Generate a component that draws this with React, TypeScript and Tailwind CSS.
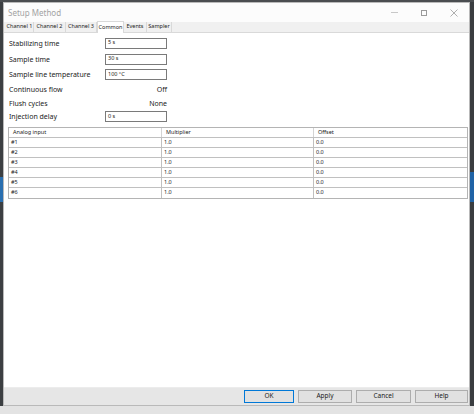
import React from "react";

const font = { fontFamily: '"Noto Sans", "Open Sans", "Liberation Sans", sans-serif' };

function Input({ value }: { value: string }) {
  return (
    <div className="w-[62px] h-[11px] border border-[#7a7a7a] bg-white flex items-center pl-[2px] text-[5.5px] leading-none text-[#222]">
      {value}
    </div>
  );
}

function Row({ label, h, children }: { label: string; h: string; children: React.ReactNode }) {
  return (
    <div className={`flex items-center ${h}`}>
      <div className="w-[96px] text-[7px] leading-none text-[#222]">{label}</div>
      {children}
    </div>
  );
}

const tabs = ["Channel 1", "Channel 2", "Channel 3", "Common", "Events", "Sampler"];
const tabW = ["w-[28px]", "w-[32px]", "w-[31px]", "w-[27px]", "w-[23px]", "w-[25px]"];

export default function App() {
  const rows = ["#1", "#2", "#3", "#4", "#5", "#6"];
  return (
    <div className="w-[474px] h-[414px] bg-[#2f3337] flex flex-col overflow-hidden" style={font}>
      <div className="h-[2px] bg-[#4a4d50]" />
      <div className="flex h-[404px]">
        <div className="w-[3px] flex flex-col">
          <div className="h-[175px] bg-[#3c3f42]" />
          <div className="h-[25px] bg-[#2a6fb0]" />
          <div className="flex-1 bg-[#3c3f42]" />
        </div>
        <div className="w-[467px] h-[404px] bg-white border border-[#b9b9b9] flex flex-col">
          {/* title bar */}
          <div className="h-[19px] flex items-center bg-[#fcfcfc] shrink-0">
            <div className="pl-[4px] text-[8px] leading-none text-[#a3a3a3]">Setup Method</div>
            <div className="ml-auto flex items-center h-full">
              <div className="w-[30px] flex justify-center">
                <div className="w-[7px] h-[1px] bg-[#c8c8c8]" />
              </div>
              <div className="w-[30px] flex justify-center">
                <div className="w-[6px] h-[6px] border border-[#9a9a9a]" />
              </div>
              <div className="w-[30px] flex justify-center">
                <svg width="8" height="8" viewBox="0 0 8 8">
                  <path d="M0.5 0.5 L7.5 7.5 M7.5 0.5 L0.5 7.5" stroke="#9a9a9a" strokeWidth="0.8" />
                </svg>
              </div>
            </div>
          </div>
          {/* tabs */}
          <div className="h-[11px] bg-[#f0f0f0] border-b border-[#d9d9d9] flex items-end shrink-0 pl-[2px]">
            {tabs.map((t, i) => (
              <div
                key={t}
                className={`${tabW[i]} flex items-center justify-center text-[5.5px] leading-none text-[#222] border-r border-[#d9d9d9] ${
                  t === "Common" ? "bg-white h-[12px] border-l border-t -mb-[1px]" : "h-[10px]"
                }`}
              >
                {t}
              </div>
            ))}
          </div>
          {/* content */}
          <div className="flex-1 bg-white flex flex-col pl-[4px] pr-[1px] pt-[2px]">
            <div className="pl-[1px] flex flex-col">
              <Row label="Stabilizing time" h="h-[16px]">
                <Input value="5 s" />
              </Row>
              <Row label="Sample time" h="h-[16px]">
                <Input value="30 s" />
              </Row>
              <Row label="Sample line temperature" h="h-[15px]">
                <Input value="100 °C" />
              </Row>
              <Row label="Continuous flow" h="h-[14px]">
                <div className="w-[62px] text-right text-[7px] leading-none text-[#222]">Off</div>
              </Row>
              <Row label="Flush cycles" h="h-[15px]">
                <div className="w-[62px] text-right text-[7px] leading-none text-[#222]">None</div>
              </Row>
              <Row label="Injection delay" h="h-[11px]">
                <Input value="0 s" />
              </Row>
            </div>
            {/* table */}
            <div className="mt-[5px] border border-[#b4b4b4] flex flex-col text-[5.5px] leading-none text-[#222]">
              <div className="grid grid-cols-[153px_152px_1fr] h-[10px] border-b border-[#c0c0c0]">
                <div className="flex items-center pl-[4px] border-r border-[#d4d4d4]">Analog input</div>
                <div className="flex items-center pl-[4px] border-r border-[#d4d4d4]">Multiplier</div>
                <div className="flex items-center pl-[4px]">Offset</div>
              </div>
              {rows.map((r, i) => (
                <div
                  key={r}
                  className={`grid grid-cols-[153px_152px_1fr] h-[10px] ${i < rows.length - 1 ? "border-b border-[#c0c0c0]" : ""}`}
                >
                  <div className="flex items-center pl-[2px] border-r border-[#c0c0c0]">{r}</div>
                  <div className="flex items-center pl-[2px] border-r border-[#c0c0c0]">1.0</div>
                  <div className="flex items-center pl-[2px]">0.0</div>
                </div>
              ))}
            </div>
          </div>
          {/* bottom bar */}
          <div className="h-[18px] bg-[#e6e6e6] border-t border-[#ececec] flex items-center justify-end gap-[4px] pr-[1px] shrink-0">
            {[
              ["OK", "w-[50px] border-[#0078d7]"],
              ["Apply", "w-[54px] border-[#adadad]"],
              ["Cancel", "w-[55px] border-[#adadad]"],
              ["Help", "w-[53px] border-[#adadad]"],
            ].map(([t, c]) => (
              <div
                key={t}
                className={`${c} h-[13px] border bg-[#e1e1e1] flex items-center justify-center text-[6.5px] leading-none text-[#222]`}
              >
                {t}
              </div>
            ))}
          </div>
        </div>
        <div className="w-[4px] flex flex-col">
          <div className="h-[170px] bg-[#3a3d40]" />
          <div className="h-[30px] bg-[#1f63a6]" />
          <div className="flex-1 bg-[#3a3d40]" />
        </div>
      </div>
      <div className="flex-1 bg-[#e3e3e3]" />
    </div>
  );
}
